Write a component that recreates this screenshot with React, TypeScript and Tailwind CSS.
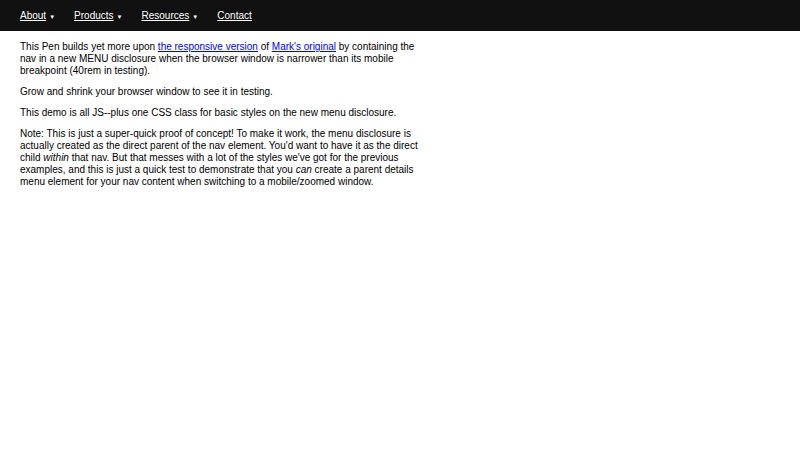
export default function App() {
  const navItems = [
    { label: "About", menu: true },
    { label: "Products", menu: true },
    { label: "Resources", menu: true },
    { label: "Contact", menu: false },
  ];

  return (
    <div className="min-h-screen bg-white text-black font-['Liberation_Sans',Arial,sans-serif] text-[10px] leading-[12px]">
      {/* Top nav */}
      <nav className="h-[31px] bg-[#111111] flex items-center pl-[20px] gap-[19px]">
        {navItems.map((item) => (
          <a key={item.label} href="#" className="text-white flex items-center text-[10px]">
            <span className="underline">{item.label}</span>
            {item.menu && <span className="ml-[3px] text-[6px] leading-none mt-[3px]">▼</span>}
          </a>
        ))}
      </nav>

      {/* Content */}
      <main className="pl-[20px] pt-[10px] w-[420px]">
        <p className="mb-[9px]">
          This Pen builds yet more upon{" "}
          <a href="#" className="text-[#0000ee] underline">the responsive version</a> of{" "}
          <a href="#" className="text-[#0000ee] underline">Mark's original</a> by containing the nav in a new MENU
          disclosure when the browser window is narrower than its mobile breakpoint (40rem in testing).
        </p>
        <p className="mb-[9px]">Grow and shrink your browser window to see it in testing.</p>
        <p className="mb-[9px]">This demo is all JS--plus one CSS class for basic styles on the new menu disclosure.</p>
        <p>
          Note: This is just a super-quick proof of concept! To make it work, the menu disclosure is actually created as
          the direct parent of the nav element. You'd want to have it as the direct child <em>within</em> that nav. But
          that messes with a lot of the styles we've got for the previous examples, and this is just a quick test to
          demonstrate that you <em>can</em> create a parent details menu element for your nav content when switching to
          a mobile/zoomed window.
        </p>
      </main>
    </div>
  );
}
